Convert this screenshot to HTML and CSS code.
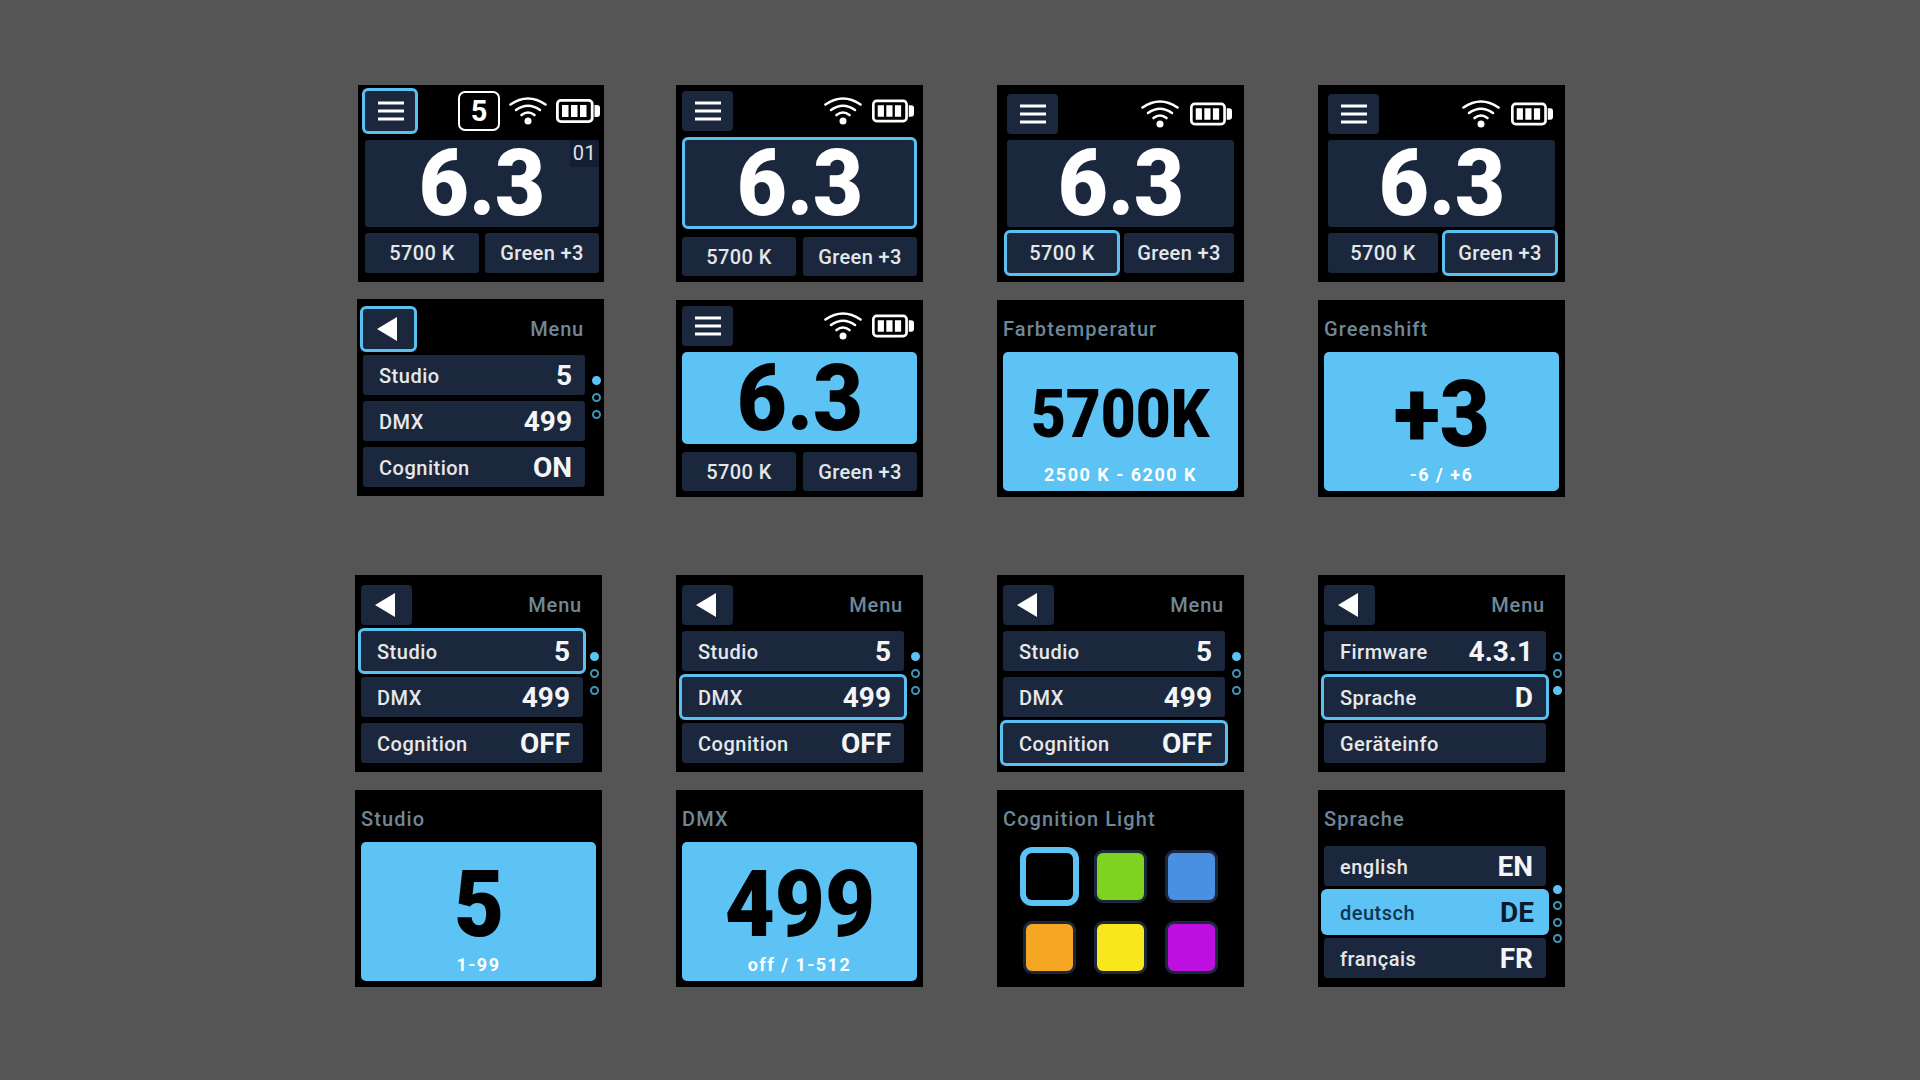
FILE: index.html
```html
<!DOCTYPE html>
<html lang="de">
<head>
<meta charset="utf-8">
<title>Display UI</title>
<link rel="stylesheet" href="styles.css">
</head>
<body>
<svg class="defs" aria-hidden="true">
  <symbol id="ham" viewBox="0 0 26 20"><path d="M0 2H26M0 10H26M0 18H26" fill="none" stroke="#fff" stroke-width="3"/></symbol>
  <symbol id="back" viewBox="0 0 20 24"><path d="M0 12L20 0V24Z" fill="#fff"/></symbol>
  <symbol id="wifi" viewBox="0 0 38 28"><g fill="none" stroke="#fff" stroke-width="2.6" stroke-linecap="round"><path d="M1.5 7.5Q19 -4.5 36.5 7.5"/><path d="M7 13Q19 4.5 31 13"/><path d="M12.5 18Q19 13 25.5 18"/></g><circle cx="19" cy="24" r="3.5" fill="#fff"/></symbol>
  <symbol id="batt" viewBox="0 0 44 24"><rect x="1.4" y="1.4" width="34.8" height="21.2" rx="3.5" fill="none" stroke="#fff" stroke-width="2.8"/><path d="M6 6h6.5v12H6zM15 6h6.5v12H15zM24 6h6.5v12H24z" fill="#fff"/><path d="M38.5 6h2.5a3 3 0 0 1 3 3v6a3 3 0 0 1-3 3h-2.5z" fill="#fff"/></symbol>
</svg>

<main class="board">
  <!-- Row 1 -->
  <section class="screen dash dash-first shift-3">
    <div class="topbar">
      <div class="btn btn-wide focus"><svg class="ico-ham"><use href="#ham"/></svg></div>
      <div class="status">
        <div class="badge">5</div>
        <svg class="ico-wifi"><use href="#wifi"/></svg>
        <svg class="ico-batt"><use href="#batt"/></svg>
      </div>
    </div>
    <div class="main"><span class="huge">6.3</span><span class="tag">01</span></div>
    <div class="subs"><div class="sub">5700 K</div><div class="sub">Green +3</div></div>
  </section>

  <section class="screen dash">
    <div class="topbar">
      <div class="btn"><svg class="ico-ham"><use href="#ham"/></svg></div>
      <div class="status"><svg class="ico-wifi"><use href="#wifi"/></svg><svg class="ico-batt"><use href="#batt"/></svg></div>
    </div>
    <div class="main focus"><span class="huge">6.3</span></div>
    <div class="subs"><div class="sub">5700 K</div><div class="sub">Green +3</div></div>
  </section>

  <section class="screen dash dash-inset">
    <div class="topbar">
      <div class="btn"><svg class="ico-ham"><use href="#ham"/></svg></div>
      <div class="status"><svg class="ico-wifi"><use href="#wifi"/></svg><svg class="ico-batt"><use href="#batt"/></svg></div>
    </div>
    <div class="main"><span class="huge">6.3</span></div>
    <div class="subs"><div class="sub focus sel">5700 K</div><div class="sub">Green +3</div></div>
  </section>

  <section class="screen dash dash-inset">
    <div class="topbar">
      <div class="btn"><svg class="ico-ham"><use href="#ham"/></svg></div>
      <div class="status"><svg class="ico-wifi"><use href="#wifi"/></svg><svg class="ico-batt"><use href="#batt"/></svg></div>
    </div>
    <div class="main"><span class="huge">6.3</span></div>
    <div class="subs"><div class="sub">5700 K</div><div class="sub focus sel">Green +3</div></div>
  </section>

  <!-- Row 2 -->
  <section class="screen list shift-2 lift">
    <div class="topbar">
      <div class="btn btn-ring focus"><svg class="ico-back"><use href="#back"/></svg></div>
      <div class="menu-label">Menu</div>
    </div>
    <div class="list-body">
      <div class="rows">
        <div class="row"><span class="lbl">Studio</span><span class="val">5</span></div>
        <div class="row"><span class="lbl">DMX</span><span class="val">499</span></div>
        <div class="row"><span class="lbl">Cognition</span><span class="val">ON</span></div>
      </div>
      <div class="dots"><i class="dot on"></i><i class="dot"></i><i class="dot"></i></div>
    </div>
  </section>

  <section class="screen dash">
    <div class="topbar">
      <div class="btn"><svg class="ico-ham"><use href="#ham"/></svg></div>
      <div class="status"><svg class="ico-wifi"><use href="#wifi"/></svg><svg class="ico-batt"><use href="#batt"/></svg></div>
    </div>
    <div class="main active"><span class="huge">6.3</span></div>
    <div class="subs"><div class="sub">5700 K</div><div class="sub">Green +3</div></div>
  </section>

  <section class="screen edit">
    <div class="title">Farbtemperatur</div>
    <div class="panel"><div class="big"><span class="big-k">5700K</span></div><div class="range">2500 K - 6200 K</div></div>
  </section>

  <section class="screen edit">
    <div class="title">Greenshift</div>
    <div class="panel"><div class="big"><span class="huge">+3</span></div><div class="range">-6 / +6</div></div>
  </section>

  <!-- Row 3 -->
  <section class="screen list">
    <div class="topbar">
      <div class="btn"><svg class="ico-back"><use href="#back"/></svg></div>
      <div class="menu-label">Menu</div>
    </div>
    <div class="list-body">
      <div class="rows">
        <div class="row focus sel"><span class="lbl">Studio</span><span class="val">5</span></div>
        <div class="row"><span class="lbl">DMX</span><span class="val">499</span></div>
        <div class="row"><span class="lbl">Cognition</span><span class="val">OFF</span></div>
      </div>
      <div class="dots"><i class="dot on"></i><i class="dot"></i><i class="dot"></i></div>
    </div>
  </section>

  <section class="screen list">
    <div class="topbar">
      <div class="btn"><svg class="ico-back"><use href="#back"/></svg></div>
      <div class="menu-label">Menu</div>
    </div>
    <div class="list-body">
      <div class="rows">
        <div class="row"><span class="lbl">Studio</span><span class="val">5</span></div>
        <div class="row focus sel"><span class="lbl">DMX</span><span class="val">499</span></div>
        <div class="row"><span class="lbl">Cognition</span><span class="val">OFF</span></div>
      </div>
      <div class="dots"><i class="dot on"></i><i class="dot"></i><i class="dot"></i></div>
    </div>
  </section>

  <section class="screen list">
    <div class="topbar">
      <div class="btn"><svg class="ico-back"><use href="#back"/></svg></div>
      <div class="menu-label">Menu</div>
    </div>
    <div class="list-body">
      <div class="rows">
        <div class="row"><span class="lbl">Studio</span><span class="val">5</span></div>
        <div class="row"><span class="lbl">DMX</span><span class="val">499</span></div>
        <div class="row focus sel"><span class="lbl">Cognition</span><span class="val">OFF</span></div>
      </div>
      <div class="dots"><i class="dot on"></i><i class="dot"></i><i class="dot"></i></div>
    </div>
  </section>

  <section class="screen list">
    <div class="topbar">
      <div class="btn"><svg class="ico-back"><use href="#back"/></svg></div>
      <div class="menu-label">Menu</div>
    </div>
    <div class="list-body">
      <div class="rows">
        <div class="row"><span class="lbl">Firmware</span><span class="val">4.3.1</span></div>
        <div class="row focus sel"><span class="lbl">Sprache</span><span class="val">D</span></div>
        <div class="row"><span class="lbl">Geräteinfo</span></div>
      </div>
      <div class="dots"><i class="dot"></i><i class="dot"></i><i class="dot on"></i></div>
    </div>
  </section>

  <!-- Row 4 -->
  <section class="screen edit">
    <div class="title">Studio</div>
    <div class="panel"><div class="big"><span class="huge">5</span></div><div class="range">1-99</div></div>
  </section>

  <section class="screen edit">
    <div class="title">DMX</div>
    <div class="panel"><div class="big"><span class="huge">499</span></div><div class="range">off / 1-512</div></div>
  </section>

  <section class="screen edit">
    <div class="title">Cognition Light</div>
    <div class="swatches">
      <div class="swatch picked"></div>
      <div class="swatch green"></div>
      <div class="swatch blue"></div>
      <div class="swatch orange"></div>
      <div class="swatch yellow"></div>
      <div class="swatch purple"></div>
    </div>
  </section>

  <section class="screen list">
    <div class="title">Sprache</div>
    <div class="list-body">
      <div class="rows">
        <div class="row"><span class="lbl">english</span><span class="val">EN</span></div>
        <div class="row chosen sel"><span class="lbl">deutsch</span><span class="val">DE</span></div>
        <div class="row"><span class="lbl">français</span><span class="val">FR</span></div>
      </div>
      <div class="dots dots-four"><i class="dot on"></i><i class="dot"></i><i class="dot"></i><i class="dot"></i></div>
    </div>
  </section>
</main>
</body>
</html>
```

FILE: styles.css
```css
* { box-sizing: border-box; }

html, body {
  margin: 0;
  height: 100%;
  background: #555555;
}

body {
  font-family: Roboto, "Liberation Sans", sans-serif;
  color: #fff;
  overflow: hidden;
}

.defs { display: none; }

.board {
  display: grid;
  grid-template-columns: repeat(4, 321px);
  grid-template-rows: 215px 275px 215px 197px;
  padding: 85px 0 0 355px;
}

.screen {
  width: 247px;
  height: 197px;
  background: #000;
  display: flex;
  flex-direction: column;
  padding: 10px 6px 0;
}

.shift-3 { margin-left: 3px; width: 246px; }
.shift-2 { margin-left: 2px; }
.lift { margin-top: -1px; }

/* shared pieces */
.topbar {
  display: flex;
  align-items: center;
  justify-content: space-between;
  height: 40px;
  flex: none;
}

.btn {
  width: 51px;
  height: 40px;
  background: #1b273d;
  border-radius: 4px;
  display: flex;
  align-items: center;
  justify-content: center;
  flex: none;
}

.focus { border: 3px solid #5ac0f0; }

.btn-wide {
  width: 56px;
  height: 46px;
  margin-left: -3px;
  border-radius: 6px;
}

.btn-wide .ico-ham { margin-left: 2px; }

.btn-ring {
  width: 57px;
  height: 46px;
  margin: -3px 0 -3px -3px;
  border-radius: 6px;
}

.ico-ham { width: 26px; height: 20px; }
.ico-back { width: 20px; height: 24px; margin-right: 3px; }
.ico-wifi { width: 38px; height: 28px; flex: none; }
.ico-batt { width: 42px; height: 24px; flex: none; }

.status {
  display: flex;
  align-items: center;
  gap: 10px;
  margin-right: 3px;
}

.badge {
  width: 42px;
  height: 40px;
  border: 2px solid #fff;
  border-radius: 7px;
  font-size: 29px;
  font-weight: 700;
  display: flex;
  align-items: center;
  justify-content: center;
}

.huge {
  display: inline-block;
  font-size: 93px;
  font-weight: 900;
  line-height: 1;
  transform: scaleX(0.93);
}

/* dashboard screens */
.dash { padding: 6px 6px 0; }

.main {
  position: relative;
  height: 92px;
  margin-top: 6px;
  background: #1b273d;
  border-radius: 3px;
  display: flex;
  align-items: center;
  justify-content: center;
  flex: none;
}

.main.active {
  background: #5cc3f4;
  color: #000;
  border-radius: 5px;
}

.main.focus { border-radius: 6px; }

.subs {
  display: flex;
  justify-content: space-between;
  height: 39px;
  margin-top: 8px;
  flex: none;
}

.sub {
  width: 114px;
  background: #1b273d;
  border-radius: 3px;
  display: flex;
  align-items: center;
  justify-content: center;
  font-size: 20px;
  font-weight: 500;
  letter-spacing: 0.4px;
  color: #e4e7ea;
}

.dash-first { padding: 3px 5px 0 7px; }
.dash-first .topbar { height: 46px; }
.dash-first .main { height: 87px; }
.dash-first .subs { height: 40px; margin-top: 6px; }
.dash-first .status { gap: 9px; margin-right: -1px; }
.dash-first .ico-batt { width: 44px; }

.tag {
  position: absolute;
  top: 0;
  right: 0;
  width: 29px;
  height: 27px;
  background: #141e33;
  border-radius: 0 3px 0 3px;
  font-size: 20px;
  color: #dfe3e6;
  text-align: center;
  line-height: 27px;
  letter-spacing: 0.5px;
}

.dash-inset { padding: 9px 10px 0; }
.dash-inset .main { height: 87px; }
.dash-inset .subs { height: 40px; margin-top: 6px; }
.dash-inset .sub { width: 110px; }
.dash-inset .sub.sel { width: 116px; margin: -3px; border-radius: 6px; }
.dash-inset .status { margin-right: 2px; gap: 11px; }

/* list screens */
.menu-label {
  font-size: 20px;
  font-weight: 500;
  letter-spacing: 0.8px;
  color: #6f8797;
  margin-right: 14px;
  padding-bottom: 1px;
}

.title {
  height: 40px;
  flex: none;
  padding-bottom: 3px;
  display: flex;
  align-items: center;
  font-size: 20px;
  font-weight: 500;
  letter-spacing: 1.1px;
  color: #6f8797;
}

.list-body {
  display: flex;
  margin-top: 6px;
}

.rows {
  width: 222px;
  flex: none;
  display: flex;
  flex-direction: column;
  gap: 6px;
}

.row {
  height: 40px;
  background: #1b273d;
  border-radius: 3px;
  padding: 1px 13px 0 16px;
  display: flex;
  align-items: center;
  justify-content: space-between;
}

.row.sel {
  height: 46px;
  margin: -3px;
  border-radius: 6px;
  padding: 1px 15px 0 19px;
}

.row.focus { padding: 1px 13px 0 16px; }

.row.chosen {
  background: #5cc3f4;
  color: #0a2238;
}

.lbl {
  font-size: 20px;
  font-weight: 500;
  letter-spacing: 0.5px;
  color: #e6e8ea;
}

.val {
  font-size: 28px;
  font-weight: 700;
  letter-spacing: 0;
  color: #f4f5f6;
}

.chosen .lbl { color: #0e3654; }
.chosen .val { color: #0a1a2e; }

.dots {
  display: flex;
  flex-direction: column;
  gap: 8px;
  margin: 21px 0 0 7px;
  flex: none;
}

.dots-four { margin-top: 39px; gap: 7.4px; }

.dot {
  display: block;
  width: 9px;
  height: 9px;
  border: 2px solid #3f95b8;
  border-radius: 50%;
}

.dot.on {
  background: #5cc3f4;
  border-color: #5cc3f4;
}

/* edit screens */
.panel {
  height: 139px;
  margin-top: 2px;
  background: #5cc3f4;
  color: #000;
  border-radius: 5px;
  display: flex;
  flex-direction: column;
  align-items: center;
}

.big {
  height: 124px;
  flex: none;
  display: flex;
  align-items: center;
  justify-content: center;
}

.big-k {
  display: inline-block;
  font-size: 67px;
  font-weight: 900;
  transform: scaleX(0.9);
}

.range {
  height: 30px;
  margin-top: -17px;
  flex: none;
  display: flex;
  align-items: center;
  font-size: 18px;
  font-weight: 700;
  letter-spacing: 1.5px;
  color: #fff;
}

.swatches {
  display: grid;
  grid-template-columns: repeat(3, 47px);
  grid-auto-rows: 47px;
  gap: 24px;
  margin: 13px 0 0 23px;
}

.swatch {
  border-radius: 6px;
  box-shadow: 0 0 0 3px #1b273d;
}

.picked { background: #000; box-shadow: 0 0 0 6px #5cc3f4; }
.green { background: #7ed321; }
.blue { background: #4a90e2; }
.orange { background: #f5a623; }
.yellow { background: #f8e71c; }
.purple { background: #bd10e0; }
```
